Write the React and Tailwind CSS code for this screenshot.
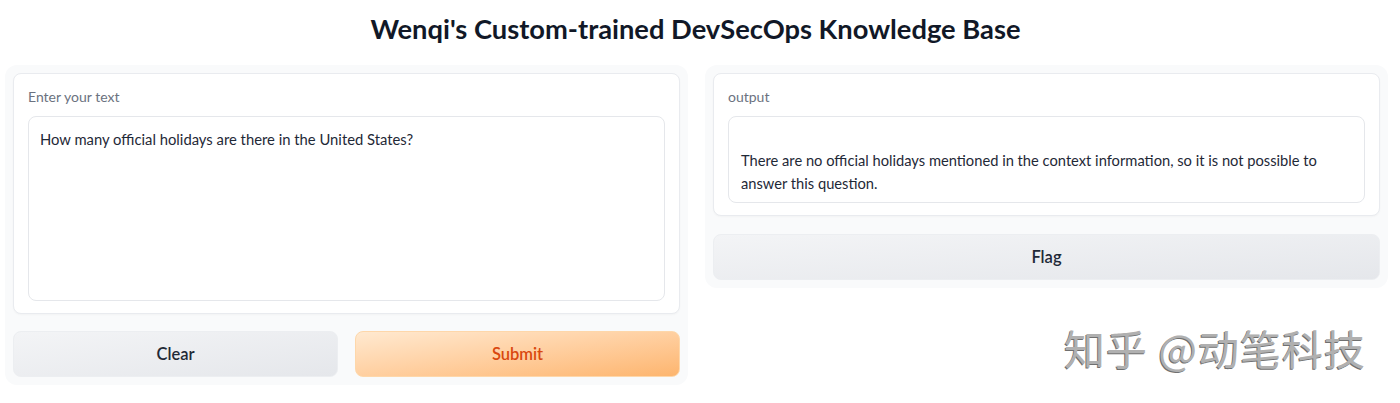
import React from "react";

const font = { fontFamily: "Lato, 'Noto Sans', sans-serif" };

const Panel = ({ children, className = "" }) => (
  <div className={`flex flex-col rounded-xl bg-[#f9fafb] p-2 ${className}`}>{children}</div>
);

const Card = ({ label, children }) => (
  <div className="rounded-lg border border-[#e9ebef] bg-white px-[14px] pt-[13px] pb-[12px] shadow-[0_1px_2px_rgba(0,0,0,0.03)]">
    <div className="mb-[9px] text-[14px] leading-[20px] text-[#6b7280]">{label}</div>
    {children}
  </div>
);

const Button = ({ children, variant = "secondary" }) => {
  const styles =
    variant === "primary"
      ? "bg-gradient-to-br from-[#ffe9d0] to-[#fdb56e] text-[#d9480f] border-[#fed7aa]"
      : "bg-gradient-to-br from-[#f3f4f6] to-[#e5e7eb] text-[#1f2937] border-[#eceef1]";
  return (
    <button
      className={`h-[46px] flex-1 rounded-lg border text-[16.5px] font-semibold ${styles}`}
    >
      {children}
    </button>
  );
};

export default function App() {
  return (
    <div className="relative h-[403px] w-[1400px] overflow-hidden bg-white" style={font}>
      <h1 className="pt-[12px] pr-[9px] text-center text-[27.3px] font-bold leading-[34px] text-[#111827]">
        Wenqi's Custom-trained DevSecOps Knowledge Base
      </h1>

      <div className="mt-[19px] flex items-start gap-[17px] pl-[5px] pr-[12px]">
        <Panel className="flex-1">
          <Card label="Enter your text">
            <div className="h-[185px] rounded-lg border border-[#e5e7eb] px-[11px] pt-[11px] text-[14.8px] leading-[22px] text-[#1f2937]">
              How many official holidays are there in the United States?
            </div>
          </Card>
          <div className="mt-[17px] flex gap-[17px]">
            <Button>Clear</Button>
            <Button variant="primary">Submit</Button>
          </div>
        </Panel>

        <Panel className="flex-1">
          <Card label="output">
            <div className="h-[87px] rounded-lg border border-[#e5e7eb] px-[12px] pt-[32px] text-[14.7px] leading-[23px] text-[#1f2937]">
              There are no official holidays mentioned in the context information, so it is not possible to answer this question.
            </div>
          </Card>
          <div className="mt-[18px] flex">
            <Button>Flag</Button>
          </div>
        </Panel>
      </div>

      <div
        className="absolute left-[1064px] top-[321px] text-[41px] leading-[52px] tracking-[1px] text-[#b0b0b0] [text-shadow:-1px_1px_0_#707070]"
        style={{ fontFamily: "'Noto Sans CJK SC', sans-serif" }}
      >
        知乎 @动笔科技
      </div>
    </div>
  );
}
